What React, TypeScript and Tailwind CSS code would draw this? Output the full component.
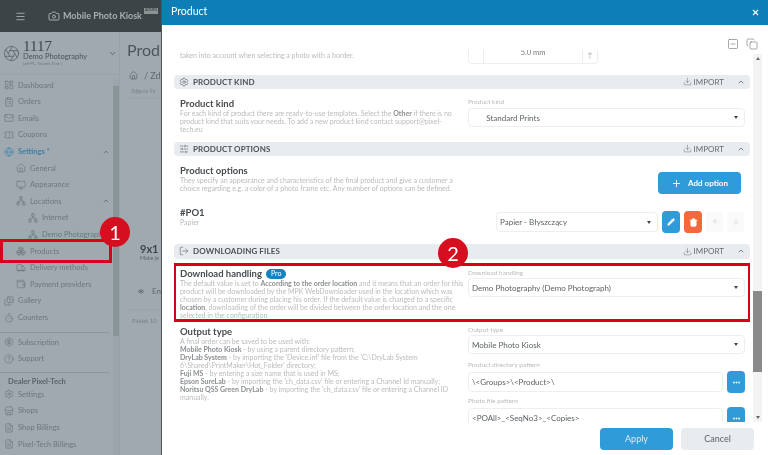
import React from "react";
import {
  Home,
  LayoutDashboard,
  ClipboardList,
  Mail,
  Ticket,
  Globe,
  Monitor,
  Network,
  Boxes,
  Truck,
  Wallet,
  Images,
  Timer,
  BadgeDollarSign,
  CircleHelp,
  Settings,
  Store,
  FileText,
  ChevronDown,
  ChevronUp,
  Menu,
  Camera,
  Eye,
  X,
  SlidersHorizontal,
  LogOut,
  Download,
  Plus,
  Pencil,
  Trash2,
  ArrowUp,
  ArrowDown,
  MinusSquare,
  Copy,
  Aperture,
  Ellipsis,
} from "lucide-react";

const NavItem = ({ icon: Icon, label, depth = 0, open = false, accent = false }: any) => (
  <div
    className={`flex items-center h-[16.6px] text-[7.5px] whitespace-nowrap ${accent ? "text-[#3f7fa6] font-bold" : "text-[#6d777c]"}`}
    style={{ paddingLeft: 4 + depth * 12 }}
  >
    {Icon ? <Icon size={10} strokeWidth={1.3} className={`shrink-0 ${accent ? "text-[#2f7eb0]" : "text-[#626c71]"}`} /> : null}
    <span className="ml-[4px]">{label}</span>
    {open ? <ChevronUp size={8} className="absolute left-[102px] text-[#555f64]" /> : null}
  </div>
);

const Section = ({ icon: Icon, title }: any) => (
  <div className="flex items-center h-[14.5px] bg-[#e9ecef] rounded-sm pl-[5px] pr-[5px]">
    <Icon size={10} strokeWidth={1.4} className="text-[#555b5f]" />
    <span className="ml-[4px] text-[8px] font-bold text-[#4c5256] tracking-[0.1px]">{title}</span>
    <Download size={9} strokeWidth={1.3} className="ml-auto text-[#666c70]" />
    <span className="ml-[2px] text-[8px] text-[#666c70]">IMPORT</span>
    <ChevronUp size={8} strokeWidth={2.2} className="ml-[13px] text-[#555b5f]" />
  </div>
);

const Title = ({ children }: any) => <div className="text-[9.5px] leading-[11px] font-bold text-[#474c50]">{children}</div>;

const Desc = ({ children, className = "w-[279px]" }: any) => <div className={`text-[7px] leading-[8px] text-[#b8bbbd] ${className}`}>{children}</div>;

const Strong = ({ children }: any) => <span className="font-bold text-[#8b8f92]">{children}</span>;

const Label = ({ children }: any) => <div className="text-[6.5px] leading-[8px] text-[#b8bbbd]">{children}</div>;

const Select = ({ value, className = "" }: any) => (
  <div className={`flex items-center h-[19px] bg-white border border-[#eceeef] rounded-sm pl-[3px] pr-[6px] text-[8px] text-[#5d6367] ${className}`}>
    <span>{value}</span>
    <span className="ml-auto w-0 h-0 border-x-[2.5px] border-x-transparent border-t-[3px] border-t-[#444]" />
  </div>
);

const PatternInput = ({ value }: any) => (
  <div className="flex gap-[4px]">
    <div className="flex-1 flex items-center h-[20px] bg-white border border-[#eceeef] rounded-sm pl-[3px] text-[8px] text-[#5d6367]">{value}</div>
    <div className="flex items-center justify-center w-[18px] h-[22px] -mt-px bg-[#2f9bd8] rounded-sm">
      <Ellipsis size={9} strokeWidth={3} className="text-white" />
    </div>
  </div>
);

export default function App() {
  return (
    <div className="relative flex w-[768px] h-[455px] overflow-hidden bg-white font-['Lato',sans-serif] blur-[0.3px]">
      {/* dimmed page behind the modal */}
      <div className="w-[162px] shrink-0 flex flex-col bg-[#9fa9af] border-r border-[#555]">
        <div className="flex items-center h-[32px] bg-[#3d4446] text-[#a9aeb0]">
          <Menu size={11} className="ml-[15px]" />
          <Camera size={12} className="ml-[22px]" />
          <span className="ml-[3px] text-[9px] font-bold whitespace-nowrap">Mobile Photo Kiosk</span>
          <span className="ml-[2px] -mt-[10px] text-[3.5px] bg-[#8d9496] text-[#333] px-px">ADMIN</span>
        </div>
        <div className="flex flex-1 min-h-0">
          <div className="relative w-[120px] shrink-0 border-r border-[#98a2a8] overflow-hidden">
            <div className="flex items-center h-[43px] pl-[3px] border-b border-[#98a2a8]">
              <Aperture size={17} strokeWidth={1} className="text-[#50595e]" />
              <div className="ml-[3px]">
                <div className="text-[15px] leading-[13px] text-[#3f474b] font-['Liberation_Serif',serif]">1117</div>
                <div className="text-[7.5px] leading-[8px] text-[#4a5357]">Demo Photography</div>
                <div className="text-[4.5px] leading-[6px] text-[#6d777c]">[all-PL, Trends Test ]</div>
              </div>
              <ChevronDown size={9} className="absolute left-[108px] top-[17px] text-[#4a5357]" />
            </div>
            <div className="pt-[2px]">
              <NavItem icon={LayoutDashboard} label="Dashboard" />
              <NavItem icon={ClipboardList} label="Orders" />
              <NavItem icon={Mail} label="Emails" />
              <NavItem icon={Ticket} label="Coupons" />
              <NavItem icon={Globe} label="Settings *" open accent />
              <NavItem icon={Home} label="General" depth={1} />
              <NavItem icon={Monitor} label="Appearance" depth={1} />
              <NavItem icon={Network} label="Locations" depth={1} open />
              <NavItem icon={Network} label="Internet" depth={2} />
              <NavItem icon={Network} label="Demo Photography" depth={2} />
              <NavItem icon={Boxes} label="Products" depth={1} />
              <NavItem icon={Truck} label="Delivery methods" depth={1} />
              <NavItem icon={Wallet} label="Payment providers" depth={1} />
              <NavItem icon={Images} label="Gallery" />
              <NavItem icon={Timer} label="Counters" />
              <div className="mt-[6px] mb-[1px] mr-[10px] border-t border-[#8b959b]" />
              <NavItem icon={BadgeDollarSign} label="Subscription" />
              <NavItem icon={CircleHelp} label="Support" />
              <div className="mt-[5px] mr-[10px] border-t border-[#8b959b]" />
              <div className="pl-[8px] pt-[3px] h-[13px] text-[7.5px] font-bold text-[#596368]">Dealer Pixel-Tech</div>
              <NavItem icon={Settings} label="Settings" />
              <NavItem icon={Store} label="Shops" />
              <NavItem icon={FileText} label="Shop Billings" />
              <NavItem icon={FileText} label="Pixel-Tech Billings" />
            </div>
            <div className="absolute left-[113px] top-[46px] bottom-0 w-[6px] bg-[#9ba5ab]">
              <div className="mt-[8px] h-[250px] bg-[#8a959a]" />
            </div>
          </div>
          <div className="flex-1 overflow-hidden pl-[7px] whitespace-nowrap text-[#5f696e]">
            <div className="pt-[8px] text-[16px] leading-[20px] text-[#4d565a]">Prod</div>
            <div className="flex items-center gap-[3px] mt-[10px] pl-[2px] text-[9px] leading-[11px]">
              <Home size={9} />
              <span className="ml-[3px]">/ Zd</span>
            </div>
            <div className="mt-[6px] pl-[4px] text-[5.5px] text-[#79838a] border-b border-[#98a2a8] pb-[3px]">Zdjęcia 9x</div>
            <div className="mt-[144px] pl-[13px] text-[11px] leading-[12px] font-bold text-[#3f474b]">9x1</div>
            <div className="pl-[13px] text-[5.5px] leading-[6px]">Make je</div>
            <div className="flex items-center gap-[8px] mt-[24px] pb-[12px] border-b border-[#98a2a8] pl-[11px] text-[8px]">
              <Eye size={9} className="text-[#3f474b]" />
              <span>En</span>
            </div>
            <div className="mt-[6px] pl-[5px] text-[6px] text-[#79838a]">Pakiet 10</div>
          </div>
        </div>
      </div>

      {/* product modal */}
      <div className="flex-1 min-w-0 flex flex-col">
        <div className="flex items-center h-[24.5px] shrink-0 bg-[#0e7fb6] pl-[9px] pr-[8px] text-white">
          <span className="text-[10.5px]">Product</span>
          <X size={9} strokeWidth={3} className="ml-auto" />
        </div>
        <div className="flex justify-end items-end gap-[7px] h-[25.5px] shrink-0 pr-[10px] text-[#5d6367]">
          <MinusSquare size={12} strokeWidth={1.1} />
          <Copy size={12} strokeWidth={1.1} />
        </div>
        <div className="flex flex-1 min-h-0">
          <div className="w-[576px] ml-[12px] shrink-0 overflow-hidden">
            <div className="flex h-[24.5px]">
              <div className="w-[288px] pl-[6px] pt-[1px]">
                <Desc>taken into account when selecting a photo with a border.</Desc>
              </div>
              <div className="ml-[6px] flex w-[130px] h-[14px] overflow-hidden border border-t-0 border-[#eceeef] rounded-b-sm text-[7.5px] text-[#777]">
                <span className="w-[15px] h-full border-r border-[#eceeef]" />
                <span className="flex-1 text-center -mt-[3px]">5.0 mm</span>
                <span className="w-[15px] h-full border-l border-[#eceeef] text-center text-[#aaa]">↑</span>
              </div>
            </div>

            <Section icon={Settings} title="PRODUCT KIND" />
            <div className="flex h-[52.5px] pl-[6px] pt-[9px]">
              <div className="w-[288px]">
                <Title>Product kind</Title>
                <Desc>
                  For each kind of product there are ready-to-use templates. Select the <Strong>Other</Strong> if there is no product kind that suits your needs. To add a new product kind contact support@pixel-tech.eu
                </Desc>
              </div>
              <div className="w-[277px]">
                <Label>Product kind</Label>
                <Select value="       Standard Prints" className="whitespace-pre mt-[2px]" />
              </div>
            </div>

            <Section icon={SlidersHorizontal} title="PRODUCT OPTIONS" />
            <div className="flex h-[44px] pl-[6px] pt-[9px]">
              <div className="w-[478px]">
                <Title>Product options</Title>
                <Desc>They specify an appearance and characteristics of the final product and give a customer a choice regarding e.g. a color of a photo frame etc. Any number of options can be defined.</Desc>
              </div>
              <div className="flex items-center justify-center gap-[6px] w-[83px] h-[22px] mt-[7px] bg-[#2f9bd8] rounded-sm text-white text-[8px] font-bold">
                <Plus size={11} />
                Add option
              </div>
            </div>
            <div className="flex h-[44px] pl-[6px] pt-[7px]">
              <div className="w-[316px]">
                <Title>#PO1</Title>
                <div className="text-[7px] leading-[8px] text-[#b8bbbd]">Papier</div>
              </div>
              <Select value="Papier - Błyszczący" className="w-[162px] h-[20px] mt-[5px]" />
              <div className="flex items-center justify-center w-[18px] h-[22px] ml-[4px] mt-[4px] bg-[#2f9bd8] rounded-sm text-white">
                <Pencil size={8} fill="white" />
              </div>
              <div className="flex items-center justify-center w-[18px] h-[22px] ml-[4px] mt-[4px] bg-[#f4683c] rounded-sm text-white">
                <Trash2 size={9} fill="white" />
              </div>
              <div className="flex items-center justify-center w-[17px] h-[20px] ml-[4px] mt-[5px] text-[#d5d8da] bg-[#fafafa]">
                <ArrowUp size={8} />
              </div>
              <div className="flex items-center justify-center w-[17px] h-[20px] ml-[4px] mt-[5px] text-[#d5d8da] bg-[#fafafa]">
                <ArrowDown size={8} />
              </div>
            </div>

            <Section icon={LogOut} title="DOWNLOADING FILES" />
            <div className="flex h-[59px] mt-[4.5px] -ml-px -mr-px border-[3px] border-[#d9001b] pl-[4px] pt-[2px]">
              <div className="w-[288px]">
                <div className="flex items-center gap-[4px]">
                  <Title>Download handling</Title>
                  <span className="flex items-center h-[10px] px-[5px] rounded-full bg-[#1583bd] text-white text-[7px]">Pro</span>
                </div>
                <Desc className="w-[287px]">
                  The default value is set to <Strong>According to the order location</Strong> and it means that an order for this
                  <br />
                  product will be downloaded by the MPK WebDownloader used in the location which was
                  <br />
                  chosen by a customer during placing his order. If the default value is changed to a specific
                  <br />
                  <Strong>location</Strong>, downloading of the order will be divided between the order location and the one
                  <br />
                  selected in the configuration.
                </Desc>
              </div>
              <div className="w-[277px] pt-[1px]">
                <Label>Download handling</Label>
                <Select value="Demo Photography (Demo Photograph)" className="mt-[1px]" />
              </div>
            </div>

            <div className="flex pl-[6px] pt-[4px]">
              <div className="w-[288px]">
                <Title>Output type</Title>
                <Desc>
                  A final order can be saved to be used with:
                  <br />
                  <Strong>Mobile Photo Kiosk</Strong> - by using a parent directory pattern;
                  <br />
                  <Strong>DryLab System</Strong> - by importing the 'Device.inf' file from the 'C:\DryLab System 6\Shared\PrintMaker\Hot_Folder' directory;
                  <br />
                  <Strong>Fuji MS</Strong> - by entering a size name that is used in MS;
                  <br />
                  <Strong>Epson SureLab</Strong> - by importing the 'ch_data.csv' file or entering a Channel Id manually;
                  <br />
                  <Strong>Noritsu QSS Green DryLab</Strong> - by importing the 'ch_data.csv' file or entering a Channel ID manually.
                </Desc>
              </div>
              <div className="w-[277px]">
                <Label>Output type</Label>
                <Select value="Mobile Photo Kiosk" className="mt-[1px]" />
                <div className="mt-[7px] mb-[3px]">
                  <Label>Product directory pattern</Label>
                </div>
                <PatternInput value="\<Groups>\<Product>\" />
                <div className="mt-[4px] mb-[3px]">
                  <Label>Photo file pattern</Label>
                </div>
                <PatternInput value="<POAll>_<SeqNo3>_<Copies>" />
              </div>
            </div>
          </div>

          <div className="ml-[3px] mt-[4px] w-[9px] shrink-0 flex flex-col items-center bg-[#f3f3f3] text-[#555]">
            <span className="mt-[3px] w-0 h-0 border-x-[2px] border-x-transparent border-b-[3px] border-b-[#666]" />
            <div className="mt-[231px] w-full h-[81px] bg-[#8a8a8a]" />
            <span className="mt-auto mb-[3px] w-0 h-0 border-x-[2px] border-x-transparent border-t-[3px] border-t-[#666]" />
          </div>
        </div>
        <div className="flex justify-end gap-[8px] h-[33px] shrink-0 pt-[6px] pr-[14px] bg-white text-[9px]">
          <div className="flex items-center justify-center w-[73px] h-[22px] rounded-sm bg-[#2f9bd8] text-[#d7edf8]">Apply</div>
          <div className="flex items-center justify-center w-[73px] h-[22px] rounded-sm bg-[#e9ecef] text-[#5d6367]">Cancel</div>
        </div>
      </div>

      {/* tutorial markers */}
      <div className="absolute left-0 top-[239px] w-[112px] h-[24px] border-[3px] border-[#d9001b]" />
      <div className="absolute left-[100px] top-[217px] flex items-center justify-center w-[30px] h-[30px] rounded-full bg-[#d50f1f] text-white text-[20px]">1</div>
      <div className="absolute left-[438px] top-[238px] flex items-center justify-center w-[30px] h-[30px] rounded-full bg-[#d50f1f] text-white text-[20px]">2</div>
    </div>
  );
}
